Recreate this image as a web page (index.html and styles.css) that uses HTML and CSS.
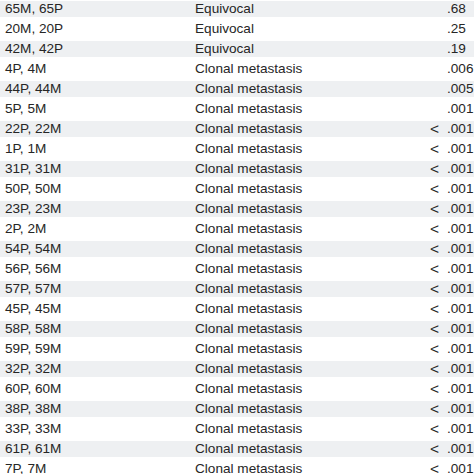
FILE: index.html
```html
<!DOCTYPE html>
<html>
<head>
<meta charset="utf-8">
<link rel="stylesheet" href="styles.css">
</head>
<body>
<div class="table">
  <div class="row shade"><span class="c1">65M, 65P</span><span class="c2">Equivocal</span><span class="c3">.68</span></div>
  <div class="row"><span class="c1">20M, 20P</span><span class="c2">Equivocal</span><span class="c3">.25</span></div>
  <div class="row shade"><span class="c1">42M, 42P</span><span class="c2">Equivocal</span><span class="c3">.19</span></div>
  <div class="row"><span class="c1">4P, 4M</span><span class="c2">Clonal metastasis</span><span class="c3">.006</span></div>
  <div class="row shade"><span class="c1">44P, 44M</span><span class="c2">Clonal metastasis</span><span class="c3">.005</span></div>
  <div class="row"><span class="c1">5P, 5M</span><span class="c2">Clonal metastasis</span><span class="c3">.001</span></div>
  <div class="row shade"><span class="c1">22P, 22M</span><span class="c2">Clonal metastasis</span><span class="c3"><span class="lt">&lt;</span>.001</span></div>
  <div class="row"><span class="c1">1P, 1M</span><span class="c2">Clonal metastasis</span><span class="c3"><span class="lt">&lt;</span>.001</span></div>
  <div class="row shade"><span class="c1">31P, 31M</span><span class="c2">Clonal metastasis</span><span class="c3"><span class="lt">&lt;</span>.001</span></div>
  <div class="row"><span class="c1">50P, 50M</span><span class="c2">Clonal metastasis</span><span class="c3"><span class="lt">&lt;</span>.001</span></div>
  <div class="row shade"><span class="c1">23P, 23M</span><span class="c2">Clonal metastasis</span><span class="c3"><span class="lt">&lt;</span>.001</span></div>
  <div class="row"><span class="c1">2P, 2M</span><span class="c2">Clonal metastasis</span><span class="c3"><span class="lt">&lt;</span>.001</span></div>
  <div class="row shade"><span class="c1">54P, 54M</span><span class="c2">Clonal metastasis</span><span class="c3"><span class="lt">&lt;</span>.001</span></div>
  <div class="row"><span class="c1">56P, 56M</span><span class="c2">Clonal metastasis</span><span class="c3"><span class="lt">&lt;</span>.001</span></div>
  <div class="row shade"><span class="c1">57P, 57M</span><span class="c2">Clonal metastasis</span><span class="c3"><span class="lt">&lt;</span>.001</span></div>
  <div class="row"><span class="c1">45P, 45M</span><span class="c2">Clonal metastasis</span><span class="c3"><span class="lt">&lt;</span>.001</span></div>
  <div class="row shade"><span class="c1">58P, 58M</span><span class="c2">Clonal metastasis</span><span class="c3"><span class="lt">&lt;</span>.001</span></div>
  <div class="row"><span class="c1">59P, 59M</span><span class="c2">Clonal metastasis</span><span class="c3"><span class="lt">&lt;</span>.001</span></div>
  <div class="row shade"><span class="c1">32P, 32M</span><span class="c2">Clonal metastasis</span><span class="c3"><span class="lt">&lt;</span>.001</span></div>
  <div class="row"><span class="c1">60P, 60M</span><span class="c2">Clonal metastasis</span><span class="c3"><span class="lt">&lt;</span>.001</span></div>
  <div class="row shade"><span class="c1">38P, 38M</span><span class="c2">Clonal metastasis</span><span class="c3"><span class="lt">&lt;</span>.001</span></div>
  <div class="row"><span class="c1">33P, 33M</span><span class="c2">Clonal metastasis</span><span class="c3"><span class="lt">&lt;</span>.001</span></div>
  <div class="row shade"><span class="c1">61P, 61M</span><span class="c2">Clonal metastasis</span><span class="c3"><span class="lt">&lt;</span>.001</span></div>
  <div class="row"><span class="c1">7P, 7M</span><span class="c2">Clonal metastasis</span><span class="c3"><span class="lt">&lt;</span>.001</span></div>
</div>
</body>
</html>
```
FILE: styles.css
```css
html, body {
  margin: 0;
  padding: 0;
  background: #ffffff;
  overflow: hidden;
}
body {
  width: 474px;
  height: 474px;
  font-family: "Liberation Sans", Arial, sans-serif;
  font-size: 13.6px;
  color: #262626;
}
.table {
  display: flex;
  flex-direction: column;
}
.row {
  display: grid;
  grid-template-columns: 190px 252px 40px;
  height: 16px;
  line-height: 16px;
  padding: 1px 0 3px 5px;
  white-space: nowrap;
}
.row.shade {
  background-image: linear-gradient(#eef0f2, #eef0f2);
  background-clip: border-box;
  background-origin: border-box;
  background-size: 100% 16px;
  background-position: 0 1px;
  background-repeat: no-repeat;
}
.lt {
  display: inline-block;
  width: 17px;
  margin-left: -17px;
  font-size: 15.5px;
  line-height: 16px;
  vertical-align: top;
}
```
